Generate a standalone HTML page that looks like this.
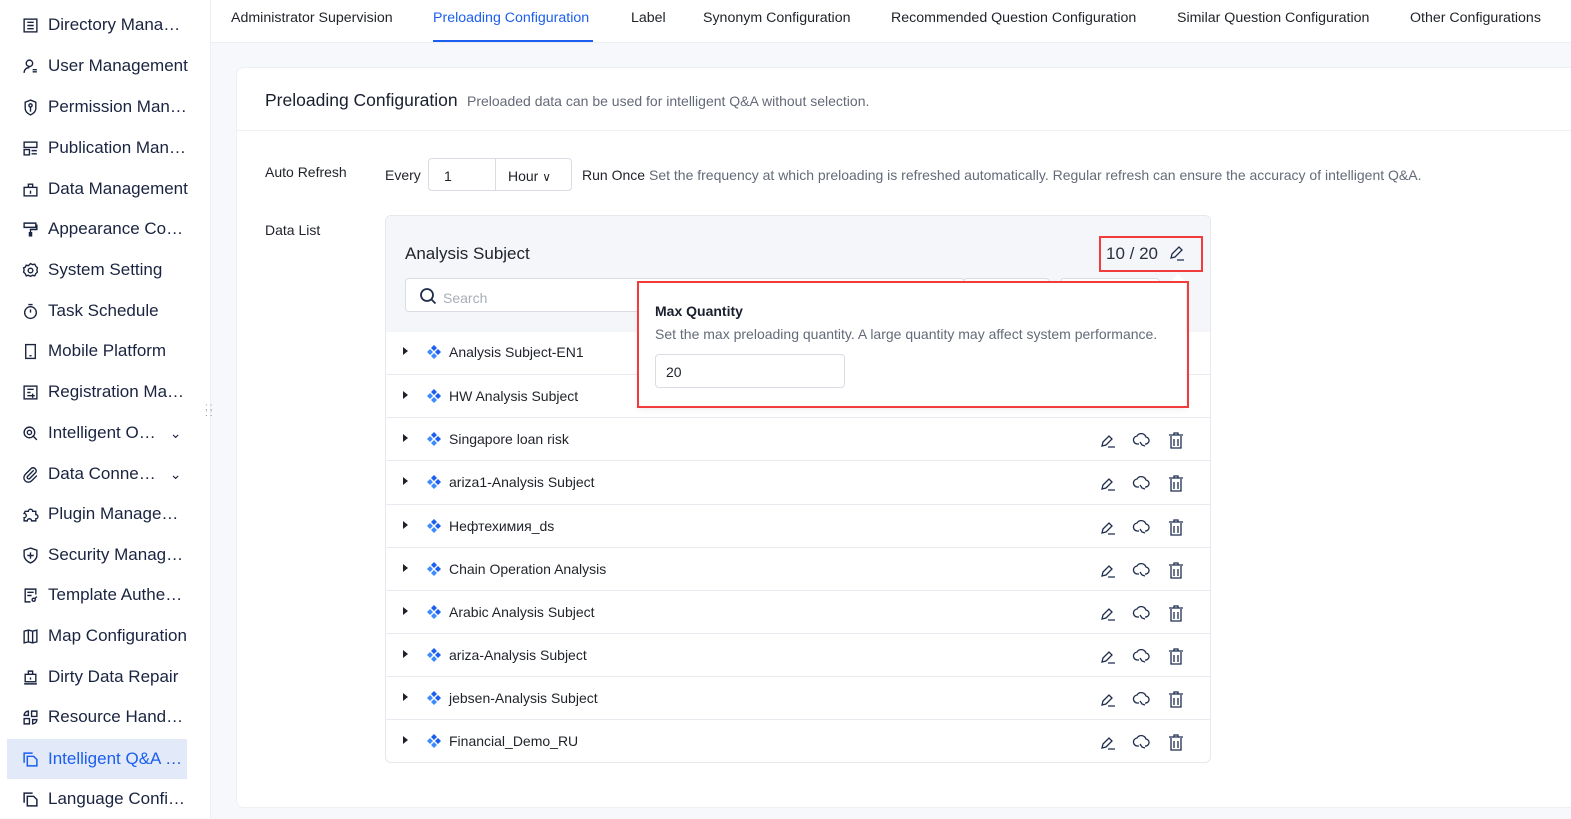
<!DOCTYPE html>
<html><head><meta charset="utf-8"><style>
*{box-sizing:border-box;margin:0;padding:0}
body{width:1571px;height:818px;overflow:hidden;background:#f7f8fb;font-family:"Liberation Sans",sans-serif;position:relative;color:#1f2329}
.side{position:absolute;left:0;top:0;width:211px;height:818px;background:#fff;border-right:1px solid #eceef3}
.si{position:absolute;left:22px;height:40px;display:flex;align-items:center;font-size:17px;color:#1a2440;white-space:nowrap}
.si svg{width:17px;height:17px;margin-right:9px;flex:none}
.si.act{left:7px;width:180px;background:#e2e9f8;color:#1b5ef0;padding-left:15px}
.tabs{position:absolute;left:211px;top:0;right:0;height:43px;background:#fff;border-bottom:1px solid #eceef3;font-size:14.2px;color:#1f2329}
.tab{position:absolute;top:10px}
.tab.a{color:#1b5ef0}
.ul{position:absolute;left:433px;top:40px;width:160px;height:2px;background:#1b5ef0}
.card{position:absolute;left:236px;top:67px;width:1345px;height:741px;background:#fff;border:1px solid #eef0f4;border-radius:8px}
.t{position:absolute;font-size:14px;white-space:nowrap}
.box{position:absolute;left:385px;top:215px;width:826px;height:548px;border:1px solid #e6e8ee;border-radius:6px;background:#fff;overflow:hidden}
.bh{position:absolute;left:0;top:0;width:100%;height:116px;background:#f5f6fa}
.row{position:absolute;left:0;width:100%;height:43px;border-top:1px solid #e8eaf0;font-size:14px}
.row .tri{position:absolute;left:17px;top:16px;width:0;height:0;border-left:5px solid #1f2329;border-top:4px solid transparent;border-bottom:4px solid transparent}
.row .ic{position:absolute;left:40px;top:13px}
.row .nm{position:absolute;left:63px;top:13px}
.row .acts{position:absolute;left:714px;top:13px}
</style></head><body>
<div class="side">
<div class="si" style="top:5px"><svg viewBox="0 0 16 16" fill="none" stroke="#1a2440" stroke-width="1.3"><rect x="2" y="2" width="12" height="12"/><path d="M5 5h6M5 8h6M5 11h6"/></svg>Directory Mana…</div>
<div class="si" style="top:46px"><svg viewBox="0 0 16 16" fill="none" stroke="#1a2440" stroke-width="1.3"><circle cx="7" cy="5" r="3"/><path d="M2 14c0-3 2-5 5-5M10 11h4M10 13h4"/></svg>User Management</div>
<div class="si" style="top:87px"><svg viewBox="0 0 16 16" fill="none" stroke="#1a2440" stroke-width="1.3"><path d="M8 1l5 2v6c0 3-3 5-5 6-2-1-5-3-5-6V3z"/><circle cx="8" cy="6" r="1.5"/><path d="M8 8v4"/></svg>Permission Man…</div>
<div class="si" style="top:128px"><svg viewBox="0 0 16 16" fill="none" stroke="#1a2440" stroke-width="1.3"><rect x="2" y="2" width="12" height="5"/><rect x="2" y="9" width="5" height="5"/><path d="M9 10h5M9 13h5"/></svg>Publication Man…</div>
<div class="si" style="top:169px"><svg viewBox="0 0 16 16" fill="none" stroke="#1a2440" stroke-width="1.3"><rect x="2" y="6" width="12" height="8"/><path d="M6 6V3h4v3M8 9v3"/></svg>Data Management</div>
<div class="si" style="top:209px"><svg viewBox="0 0 16 16" fill="none" stroke="#1a2440" stroke-width="1.3"><path d="M2 2h11v4H2zM13 4h1v4H8v3"/><rect x="7" y="11" width="2" height="3" fill="#1a2440"/></svg>Appearance Co…</div>
<div class="si" style="top:250px"><svg viewBox="0 0 16 16" fill="none" stroke="#1a2440" stroke-width="1.3"><path d="M8 1.5l2 1 2-.5 1 2 1.5 1.5-.5 2 .5 2L13 11l-1 2-2-.5-2 1-2-1-2 .5-1-2-1.5-1.5.5-2-.5-2L3 5l1-2 2 .5z"/><circle cx="8" cy="8" r="2.2"/></svg>System Setting</div>
<div class="si" style="top:291px"><svg viewBox="0 0 16 16" fill="none" stroke="#1a2440" stroke-width="1.3"><circle cx="8" cy="9" r="5.5"/><path d="M6 1.5h4M8 6v3"/></svg>Task Schedule</div>
<div class="si" style="top:331px"><svg viewBox="0 0 16 16" fill="none" stroke="#1a2440" stroke-width="1.3"><rect x="3.5" y="1.5" width="9" height="13"/><path d="M7 12h2"/></svg>Mobile Platform</div>
<div class="si" style="top:372px"><svg viewBox="0 0 16 16" fill="none" stroke="#1a2440" stroke-width="1.3"><rect x="2" y="2" width="12" height="12"/><path d="M5 5h6M5 8h3M5 11h3M10 9v4M8 11h4"/></svg>Registration Ma…</div>
<div class="si" style="top:413px"><svg viewBox="0 0 16 16" fill="none" stroke="#1a2440" stroke-width="1.3"><circle cx="7" cy="7" r="5"/><circle cx="7" cy="7" r="2"/><path d="M10 10l4 4"/></svg>Intelligent O… <span style="margin-left:14px;font-size:14px">&#8964;</span></div>
<div class="si" style="top:454px"><svg viewBox="0 0 16 16" fill="none" stroke="#1a2440" stroke-width="1.3"><path d="M11 4L5 10a1.5 1.5 0 002 2l6-6a3 3 0 00-4-4L3 8a4 4 0 006 6l5-5"/></svg>Data Conne… <span style="margin-left:14px;font-size:14px">&#8964;</span></div>
<div class="si" style="top:494px"><svg viewBox="0 0 16 16" fill="none" stroke="#1a2440" stroke-width="1.3"><path d="M3 5h3a2 2 0 114 0h3v3a2 2 0 110 4v2H9a2 2 0 10-4 0H2v-3a2 2 0 100-4z"/></svg>Plugin Manage…</div>
<div class="si" style="top:535px"><svg viewBox="0 0 16 16" fill="none" stroke="#1a2440" stroke-width="1.3"><path d="M8 1l6 2v5c0 3-3 6-6 7-3-1-6-4-6-7V3z"/><path d="M8 5v6M5 8h6"/></svg>Security Manag…</div>
<div class="si" style="top:575px"><svg viewBox="0 0 16 16" fill="none" stroke="#1a2440" stroke-width="1.3"><path d="M13 7V2H3v12h5M5 5h6M5 8h4"/><circle cx="11" cy="12" r="1.5"/><path d="M12 11l2-2"/></svg>Template Authe…</div>
<div class="si" style="top:616px"><svg viewBox="0 0 16 16" fill="none" stroke="#1a2440" stroke-width="1.3"><path d="M2 3l4-1 4 1 4-1v11l-4 1-4-1-4 1zM6 2v11M10 3v11"/></svg>Map Configuration</div>
<div class="si" style="top:657px"><svg viewBox="0 0 16 16" fill="none" stroke="#1a2440" stroke-width="1.3"><rect x="3" y="5" width="10" height="7"/><path d="M6 5V2h4v3M2 14h12M8 8v2"/></svg>Dirty Data Repair</div>
<div class="si" style="top:697px"><svg viewBox="0 0 16 16" fill="none" stroke="#1a2440" stroke-width="1.3"><path d="M9 2h5v5H9zM2 9h5v5H2zM2 6a4 4 0 014-4v4zM14 10a4 4 0 01-4 4v-4z"/></svg>Resource Hand…</div>
<div class="si act" style="top:739px"><svg viewBox="0 0 16 16" fill="none" stroke="#1b5ef0" stroke-width="1.4"><path d="M2 11V2h8"/><path d="M5 5h6l3 3v6H5z"/></svg>Intelligent Q&amp;A …</div>
<div class="si" style="top:779px"><svg viewBox="0 0 16 16" fill="none" stroke="#1a2440" stroke-width="1.4"><path d="M2 11V2h8"/><path d="M5 5h6l3 3v6H5z"/></svg>Language Confi…</div>
</div>
<div style="position:absolute;left:205px;top:405px;font-size:10px;color:#8a93a6;letter-spacing:2px;line-height:6px">::<br>::</div>
<div class="tabs">
<span class="tab" style="left:20px">Administrator Supervision</span>
<span class="tab a" style="left:222px">Preloading Configuration</span>
<span class="tab" style="left:420px">Label</span>
<span class="tab" style="left:492px">Synonym Configuration</span>
<span class="tab" style="left:680px">Recommended Question Configuration</span>
<span class="tab" style="left:966px">Similar Question Configuration</span>
<span class="tab" style="left:1199px">Other Configurations</span>
</div>
<div class="ul"></div>
<div class="card"><div style="position:absolute;left:0;top:62px;width:100%;border-top:1px solid #eef0f4"></div></div>
<div class="t" style="left:265px;top:90px;font-size:17.5px;color:#1a1f2e">Preloading Configuration</div>
<div class="t" style="left:467px;top:93px;font-size:14px;color:#646a78">Preloaded data can be used for intelligent Q&amp;A without selection.</div>
<div class="t" style="left:265px;top:164px;font-size:14px">Auto Refresh</div>
<div class="t" style="left:385px;top:167px;font-size:14px">Every</div>
<div style="position:absolute;left:428px;top:158px;width:144px;height:33px;border:1px solid #d9dce3;border-radius:4px;background:#fff"><div style="position:absolute;left:66px;top:0;height:31px;border-left:1px solid #d9dce3"></div></div>
<div class="t" style="left:444px;top:168px;font-size:14px">1</div>
<div class="t" style="left:508px;top:168px;font-size:14px">Hour <span style="font-size:12px">&#8744;</span></div>
<div class="t" style="left:582px;top:167px;font-size:14px">Run Once</div>
<div class="t" style="left:649px;top:167px;font-size:14px;color:#646a78">Set the frequency at which preloading is refreshed automatically. Regular refresh can ensure the accuracy of intelligent Q&amp;A.</div>
<div class="t" style="left:265px;top:222px;font-size:14px">Data List</div>
<div class="box">
<div class="bh"></div>
<div class="t" style="left:19px;top:28px;font-size:17px">Analysis Subject</div>
<div style="position:absolute;left:19px;top:62px;width:560px;height:34px;border:1px solid #d9dce3;border-radius:4px;background:#fff"></div>
<svg style="position:absolute;left:33px;top:71px" width="18" height="18" viewBox="0 0 18 18" fill="none" stroke="#1f2d4d" stroke-width="1.8"><circle cx="8" cy="8" r="6"/><path d="M12.5 12.5l4 4"/></svg>
<div class="t" style="left:57px;top:74px;font-size:14px;color:#a8adb8">Search</div>
<div style="position:absolute;left:577px;top:62px;width:87px;height:34px;border:1px solid #d9dce3;border-radius:4px;background:#fff"></div>
<div style="position:absolute;left:674px;top:62px;width:100px;height:34px;border:1px solid #d9dce3;border-radius:4px;background:#fff"></div>
<div class="t" style="left:720px;top:28px;font-size:17px;color:#2a3040">10 / 20</div>
<svg style="position:absolute;left:782px;top:28px" width="18" height="18" viewBox="0 0 18 18" fill="none" stroke="#1f2d4d" stroke-width="1.3"><path d="M3 14l1-4 7-7 3 3-7 7zM9 16h7"/></svg>
</div>
<div id="rows"></div>
<div style="position:absolute;left:1099px;top:236px;width:104px;height:36px;border:2px solid #f23c3c"></div>
<div style="position:absolute;left:638px;top:283px;width:548px;height:124px;background:#fff;box-shadow:0 2px 6px rgba(0,0,0,.08)"></div>
<div style="position:absolute;left:1170px;top:274px;width:0;height:0;border-left:8px solid transparent;border-right:8px solid transparent;border-bottom:8px solid #fff"></div>
<div style="position:absolute;left:637px;top:281px;width:552px;height:127px;border:2px solid #f23c3c"></div>
<div class="t" style="left:655px;top:303px;font-size:14px;font-weight:bold;color:#1a1f2e">Max Quantity</div>
<div class="t" style="left:655px;top:326px;font-size:14px;color:#646a78">Set the max preloading quantity. A large quantity may affect system performance.</div>
<div style="position:absolute;left:655px;top:354px;width:190px;height:34px;border:1px solid #d9dce3;border-radius:4px"></div>
<div class="t" style="left:666px;top:364px;font-size:14px">20</div>
<script>
var n=["Analysis Subject-EN1","HW Analysis Subject","Singapore loan risk","ariza1-Analysis Subject","Нефтехимия_ds","Chain Operation Analysis","Arabic Analysis Subject","ariza-Analysis Subject","jebsen-Analysis Subject","Financial_Demo_RU"];
var tops=[331,374,417,460,504,547,590,633,676,719];
var ic='<svg width="16" height="16" viewBox="0 0 16 16"><path d="M8 1l3 3-3 3-3-3z" fill="#1b5ef0"/><path d="M4 5l3 3-3 3-3-3z" fill="#3d8bff"/><path d="M12 5l3 3-3 3-3-3z" fill="#1b5ef0"/><path d="M8 9l3 3-3 3-3-3z" fill="#3d8bff"/></svg>';
var ac='<svg width="100" height="18" viewBox="0 0 100 18" fill="none" stroke="#1f2d4d" stroke-width="1.3"><path d="M2 15l1-4 6-6 3 3-6 6zM8 16h7"/><path d="M39 13h-1a4 4 0 01-1-8 5 5 0 019 1 3.5 3.5 0 01-1 7M40 11l2 3 3 1" /><path d="M69 4h14M74 4V2h4v2M71 5v12h10V5M74 8v7M78 8v7"/></svg>';
var h='';for(var i=0;i<10;i++){h+='<div class="row" style="left:386px;width:824px;top:'+tops[i]+'px;position:absolute;'+(i==0?'border-top:none;':'')+'"><div class="tri"></div><div class="ic">'+ic+'</div><div class="nm">'+n[i]+'</div>'+(i>1?'<div class="acts">'+ac+'</div>':'')+'</div>';}
document.getElementById('rows').innerHTML=h;
</script>
</body></html>
